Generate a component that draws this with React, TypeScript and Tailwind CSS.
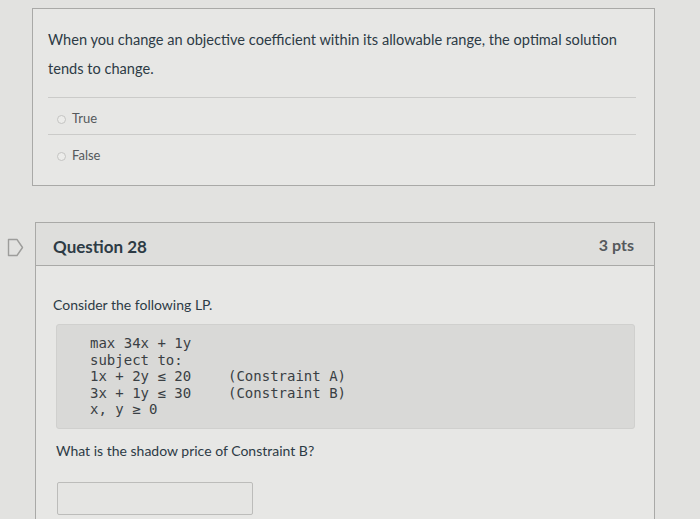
import React from 'react';

const lp = [
  ['max 34x + 1y', ''],
  ['subject to:', ''],
  ['1x + 2y ≤ 20', '(Constraint A)'],
  ['3x + 1y ≤ 30', '(Constraint B)'],
  ['x, y ≥ 0', ''],
];

const Radio = ({ label }: { label: string }) => (
  <div className="flex items-center h-[36px] pl-[9px] pt-[6px]">
    <span className="w-[9px] h-[9px] rounded-full border border-[#c4c4c2] bg-[#ececea] mr-[6px]" />
    <span className="text-[13px] text-[#55595c]">{label}</span>
  </div>
);

const App = () => {
  return (
    <div
      className="w-[700px] h-[519px] overflow-hidden bg-[#e2e2e0] pt-[8px]"
      style={{ fontFamily: 'Lato, "Open Sans", sans-serif' }}
    >
      {/* previous question */}
      <div className="ml-[32px] w-[623px] border border-[#a9a9a7] bg-[#e7e7e5] pl-[15px] pr-[18px] pt-[16px] pb-[14px]">
        <p className="text-[14.6px] leading-[29px] text-[#2d3b45]">
          When you change an objective coefficient within its allowable range, the optimal solution tends to change.
        </p>
        <div className="mt-[14px] border-t border-[#cbcbc9]">
          <Radio label="True" />
        </div>
        <div className="border-t border-[#cbcbc9]">
          <Radio label="False" />
        </div>
      </div>

      {/* question 28 */}
      <div className="flex mt-[36px]">
        <div className="w-[35px] shrink-0 pt-[16px] pl-[7px]">
          <svg width="17" height="19" viewBox="0 0 17 19" fill="none">
            <path d="M1.5 1.5 H10 L15.5 9.5 L10 17.5 H1.5 Z" stroke="#9d9d9b" strokeWidth="1.4" strokeLinejoin="round" />
          </svg>
        </div>
        <div className="w-[620px] border border-[#a9a9a7] bg-[#e7e7e5]">
          <div className="h-[43px] flex items-center justify-between bg-[#dededc] border-b border-[#a9a9a7] pl-[17px] pr-[20px]">
            <span className="pt-[5px] text-[17px] font-bold text-[#2d3b45]">Question 28</span>
            <span className="pt-[2px] text-[16px] font-bold text-[#55595c]">3 pts</span>
          </div>
          <div className="pl-[17px] pr-[19px] pt-[30px] pb-[10px]">
            <p className="text-[14px] text-[#2d3b45] leading-[18px]">Consider the following LP.</p>
            <div
              className="mt-[10px] ml-[3px] rounded-[3px] border border-[#d0d0ce] bg-[#d9d9d7] pl-[33px] pt-[10px] pb-[10px] text-[14px] leading-[16.5px] text-[#3a3f44]"
              style={{ fontFamily: '"DejaVu Sans Mono", monospace' }}
            >
              {lp.map(([a, b], i) => (
                <div key={i} className="flex">
                  <span className="w-[138px]">{a}</span>
                  <span>{b}</span>
                </div>
              ))}
            </div>
            <p className="mt-[13px] ml-[3px] text-[14px] text-[#2d3b45] leading-[18px]">
              What is the shadow price of Constraint B?
            </p>
            <div className="mt-[22px] ml-[4px] w-[196px] h-[33px] border border-[#bcbcba] rounded-[2px] bg-[#e5e5e3]" />
          </div>
        </div>
      </div>
    </div>
  );
};

export default App;
